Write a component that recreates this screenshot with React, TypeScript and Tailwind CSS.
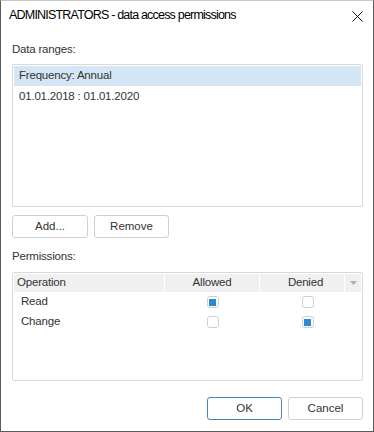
import React from 'react';

const ranges = ['Frequency: Annual', '01.01.2018 : 01.01.2020'];

const perms = [
  { op: 'Read', allowed: true, denied: false },
  { op: 'Change', allowed: false, denied: true },
];

function Check({ on }: { on: boolean }) {
  return (
    <div className="w-[12px] h-[12px] rounded-[3px] border border-[#cfcfcf] bg-white flex items-center justify-center">
      {on && <div className="w-[7px] h-[7px] bg-[#2b8ad2]" />}
    </div>
  );
}

function Btn({ label, primary, w }: { label: string; primary?: boolean; w: string }) {
  return (
    <button
      className={
        'h-[23px] rounded-[3px] border bg-white text-[11.5px] text-[#333] flex items-center justify-center ' +
        w +
        (primary ? ' border-[#3d87c6]' : ' border-[#d0d0d0]')
      }
    >
      {label}
    </button>
  );
}

export default function App() {
  return (
    <div
      className="w-[374px] h-[432px] bg-white border-x border-b border-[#5b5b5b] border-t border-t-[#c8c8c8] flex flex-col"
      style={{ fontFamily: '"Liberation Sans", Arial, sans-serif' }}
    >
      {/* title bar */}
      <div className="h-[29px] flex items-center justify-between pl-[8px] pr-[10px]">
        <span className="text-[12.5px] tracking-[-0.8px] text-black">
          ADMINISTRATORS - data access permissions
        </span>
        <svg width="11" height="11" viewBox="0 0 11 11" className="mt-[1px]">
          <path d="M0.5 0.5 L10.5 10.5 M10.5 0.5 L0.5 10.5" stroke="#111" strokeWidth="1" />
        </svg>
      </div>

      <div className="pl-[11px] flex flex-col">
        <div className="h-[34px] pt-[6px] flex items-center text-[11.5px] tracking-[-0.2px] text-[#333]">
          Data ranges:
        </div>

        <div className="w-[351px] h-[143px] border border-[#d9d9d9] rounded-[2px] p-[1px]">
          {ranges.map((r, i) => (
            <div
              key={i}
              className={
                'h-[20px] pl-[5px] flex items-center text-[11.5px] tracking-[-0.2px] text-[#333] ' +
                (i === 0 ? 'bg-[#d4e6f5]' : 'mt-[1px]')
              }
            >
              {r}
            </div>
          ))}
        </div>

        <div className="mt-[8px] flex gap-[6px]">
          <Btn label="Add..." w="w-[76px]" />
          <Btn label="Remove" w="w-[75px]" />
        </div>

        <div className="h-[34px] pt-[4px] flex items-center text-[11.5px] tracking-[-0.2px] text-[#333]">
          Permissions:
        </div>

        <div className="w-[351px] h-[109px] border border-[#d9d9d9] rounded-[2px] p-[1px]">
          <div className="h-[18px] flex gap-[1px] text-[11.5px] tracking-[-0.2px] text-[#333]">
            <div className="w-[150px] bg-[#f0f0f0] pl-[3px] flex items-center">Operation</div>
            <div className="w-[94px] bg-[#f0f0f0] flex items-center justify-center">Allowed</div>
            <div className="w-[84px] bg-[#f0f0f0] pl-[7px] flex items-center justify-center">Denied</div>
            <div className="flex-1 bg-[#f0f0f0] flex items-center justify-center">
              <svg width="7" height="4" viewBox="0 0 7 4">
                <path d="M0 0 L7 0 L3.5 4 Z" fill="#b0b0b0" />
              </svg>
            </div>
          </div>
          {perms.map((p) => (
            <div key={p.op} className="h-[20px] flex text-[11.5px] tracking-[-0.2px] text-[#333]">
              <div className="w-[151px] pl-[7px] flex items-center">{p.op}</div>
              <div className="w-[95px] flex items-center justify-center">
                <Check on={p.allowed} />
              </div>
              <div className="w-[95px] flex items-center justify-center">
                <Check on={p.denied} />
              </div>
            </div>
          ))}
        </div>

        <div className="mt-[16px] w-[351px] flex justify-end gap-[6px]">
          <Btn label="OK" primary w="w-[75px]" />
          <Btn label="Cancel" w="w-[75px]" />
        </div>
      </div>
    </div>
  );
}
